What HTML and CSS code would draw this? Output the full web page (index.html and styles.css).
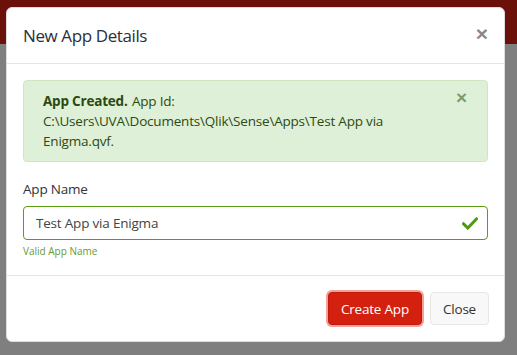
FILE: index.html
```html
<!DOCTYPE html>
<html lang="en">
<head>
    <meta charset="UTF-8">
    <meta name="viewport" content="width=device-width, initial-scale=1.0">
    <title>New App Details</title>
    <link rel="stylesheet" href="styles.css">
</head>
<body>
    <!-- page behind the backdrop -->
    <div class="navbar"></div>
    <div class="backdrop"></div>

    <div class="modal">
        <div class="modal-header">
            <h4 class="modal-title">New App Details</h4>
            <button class="close">&times;</button>
        </div>

        <div class="modal-body">
            <div class="alert alert-success">
                <button class="close alert-close">&times;</button>
                <p class="alert-text"><strong>App Created.</strong> App Id: C:\Users\UVA\Documents\Qlik\Sense\Apps\Test App via Enigma.qvf.</p>
            </div>

            <div class="form-group has-success">
                <label class="control-label" for="appName">App Name</label>
                <div class="input-wrap">
                    <input class="form-control" id="appName" type="text" value="Test App via Enigma">
                    <svg class="feedback" width="16" height="13" viewBox="0 0 16 13">
                        <path d="M1.5 6.8 L5.8 11 L14.5 2" fill="none" stroke="currentColor" stroke-width="3" stroke-linecap="square"/>
                    </svg>
                </div>
                <span class="help-block">Valid App Name</span>
            </div>
        </div>

        <div class="modal-footer">
            <button class="btn btn-danger">Create App</button>
            <button class="btn btn-default">Close</button>
        </div>
    </div>
</body>
</html>
```

FILE: styles.css
```css
* {
    box-sizing: border-box;
}

body {
    margin: 0;
    height: 355px;
    overflow: hidden;
    font-family: 'Open Sans', 'Liberation Sans', sans-serif;
    font-size: 13.5px;
    letter-spacing: -0.2px;
    line-height: 20px;
    color: #333;
    background: #fff;
    position: relative;
}

.navbar {
    height: 44px;
    background: #d62214;
}

.backdrop {
    position: absolute;
    inset: 0;
    background: #000;
    opacity: 0.5;
}

.modal {
    position: absolute;
    left: 6px;
    top: 7px;
    width: 499px;
    height: 335px;
    background: #fff;
    border: 1px solid #ddd;
    border-radius: 6px;
    display: flex;
    flex-direction: column;
}

.modal-header {
    display: flex;
    align-items: center;
    justify-content: space-between;
    height: 56px;
    padding: 0 16px;
    border-bottom: 1px solid #e5e5e5;
}

.modal-title {
    margin: 0;
    font-size: 17px;
    letter-spacing: -0.4px;
    font-weight: normal;
    color: #2b2f3a;
}

.close {
    border: none;
    background: none;
    padding: 0;
    font-family: 'Liberation Sans', sans-serif;
    font-size: 21px;
    font-weight: bold;
    line-height: 1;
    color: #8a8a8a;
    cursor: pointer;
    margin-top: -4px;
}

.modal-body {
    flex: 1;
    padding: 16px 16px 0;
}

.alert {
    position: relative;
    padding: 10px 40px 10px 19px;
    border: 1px solid #d0e6c0;
    border-radius: 4px;
    margin-bottom: 17px;
}

.alert-text {
    margin: 0;
}

.alert-success {
    background: #dff0d8;
    color: #2d4a12;
}

.alert-success strong {
    font-weight: bold;
    color: #2b4a0e;
    margin-right: 1px;
}

.alert-close {
    position: absolute;
    right: 20px;
    top: 11px;
    color: #7d9c6e;
    font-size: 19px;
}

.control-label {
    display: block;
    margin-bottom: 7px;
    color: #333;
}

.input-wrap {
    position: relative;
}

.form-control {
    display: block;
    width: 100%;
    height: 34px;
    padding: 6px 12px;
    font-family: inherit;
    font-size: 13.5px;
    letter-spacing: -0.2px;
    color: #444;
    border: 1px solid #5a9e12;
    border-radius: 4px;
    outline: none;
}

.feedback {
    position: absolute;
    right: 10px;
    top: 11px;
    color: #4f9a0f;
}

.help-block {
    display: block;
    margin-top: 4px;
    font-size: 10px;
    letter-spacing: 0;
    line-height: 14px;
    color: #6a9a2e;
}

.modal-footer {
    display: flex;
    justify-content: flex-end;
    gap: 8px;
    padding: 15px 15px;
    height: 66px;
    border-top: 1px solid #e5e5e5;
}

.btn {
    height: 33px;
    padding: 0 12px;
    font-family: inherit;
    font-size: 13.5px;
    letter-spacing: -0.2px;
    white-space: nowrap;
    border-radius: 4px;
    cursor: pointer;
    margin-top: 1px;
}

.btn-danger {
    padding: 0 12px;
    background: #d3200f;
    color: #fff;
    border: 1px solid #c01a0b;
    box-shadow: 0 0 0 2px #f2a199;
}

.btn-default {
    padding: 0 12px;
    background: #f8f8f8;
    color: #333;
    border: 1px solid #e6e6e6;
}
```
